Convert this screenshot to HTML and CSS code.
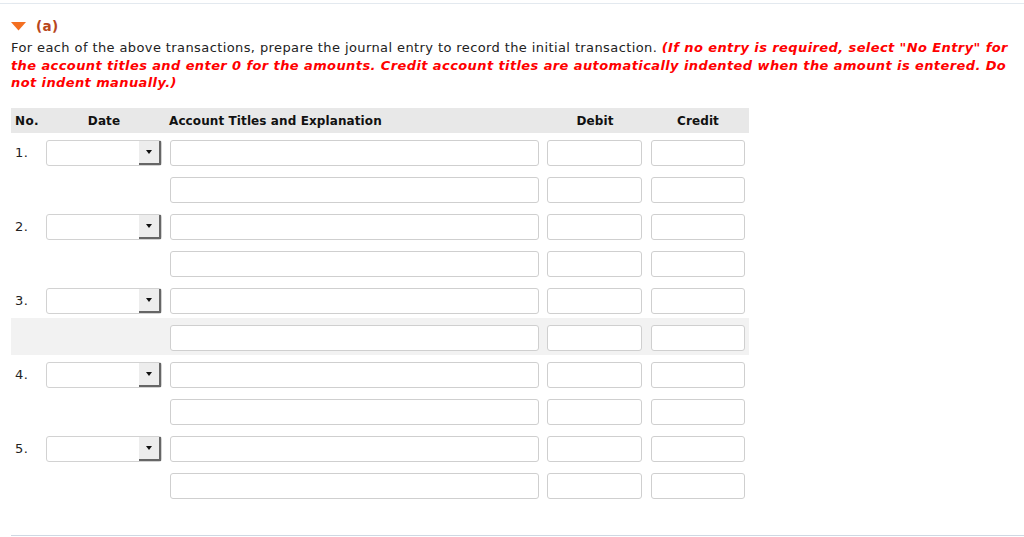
FILE: index.html
```html
<!DOCTYPE html>
<html>
<head>
<meta charset="utf-8">
<link rel="stylesheet" href="styles.css">
</head>
<body>
<div class="topline"></div>
<div class="content">
  <div class="part">
    <svg class="tri" width="15" height="9" viewBox="0 0 15 9"><polygon points="0,0 15,0 7.5,8.5" fill="#f36f21"/></svg>
    <span class="part-label">(a)</span>
  </div>
  <p class="instr">For each of the above transactions, prepare the journal entry to record the initial transaction. <em>(If no entry is required, select "No Entry" for the account titles and enter 0 for the amounts. Credit account titles are automatically indented when the amount is entered. Do not indent manually.)</em></p>

  <div class="journal">
    <div class="row head">
      <div class="c-no">No.</div>
      <div class="c-date">Date</div>
      <div class="c-acct">Account Titles and Explanation</div>
      <div class="c-debit">Debit</div>
      <div class="c-credit">Credit</div>
    </div>

    <div class="row"><div class="c-no">1.</div><div class="c-date"><div class="sel"><span class="btn"><i></i></span></div></div><div class="c-acct"><div class="inp"></div></div><div class="c-debit"><div class="inp"></div></div><div class="c-credit"><div class="inp"></div></div></div>
    <div class="row"><div class="c-no"></div><div class="c-date"></div><div class="c-acct"><div class="inp"></div></div><div class="c-debit"><div class="inp"></div></div><div class="c-credit"><div class="inp"></div></div></div>

    <div class="row"><div class="c-no">2.</div><div class="c-date"><div class="sel"><span class="btn"><i></i></span></div></div><div class="c-acct"><div class="inp"></div></div><div class="c-debit"><div class="inp"></div></div><div class="c-credit"><div class="inp"></div></div></div>
    <div class="row"><div class="c-no"></div><div class="c-date"></div><div class="c-acct"><div class="inp"></div></div><div class="c-debit"><div class="inp"></div></div><div class="c-credit"><div class="inp"></div></div></div>

    <div class="row"><div class="c-no">3.</div><div class="c-date"><div class="sel"><span class="btn"><i></i></span></div></div><div class="c-acct"><div class="inp"></div></div><div class="c-debit"><div class="inp"></div></div><div class="c-credit"><div class="inp"></div></div></div>
    <div class="row hl"><div class="c-no"></div><div class="c-date"></div><div class="c-acct"><div class="inp"></div></div><div class="c-debit"><div class="inp"></div></div><div class="c-credit"><div class="inp"></div></div></div>

    <div class="row"><div class="c-no">4.</div><div class="c-date"><div class="sel"><span class="btn"><i></i></span></div></div><div class="c-acct"><div class="inp"></div></div><div class="c-debit"><div class="inp"></div></div><div class="c-credit"><div class="inp"></div></div></div>
    <div class="row"><div class="c-no"></div><div class="c-date"></div><div class="c-acct"><div class="inp"></div></div><div class="c-debit"><div class="inp"></div></div><div class="c-credit"><div class="inp"></div></div></div>

    <div class="row"><div class="c-no">5.</div><div class="c-date"><div class="sel"><span class="btn"><i></i></span></div></div><div class="c-acct"><div class="inp"></div></div><div class="c-debit"><div class="inp"></div></div><div class="c-credit"><div class="inp"></div></div></div>
    <div class="row"><div class="c-no"></div><div class="c-date"></div><div class="c-acct"><div class="inp"></div></div><div class="c-debit"><div class="inp"></div></div><div class="c-credit"><div class="inp"></div></div></div>
  </div>
  <div class="bottomline"></div>
</div>
</body>
</html>
```

FILE: styles.css
```css
html, body {
  margin: 0;
  padding: 0;
  background: #fff;
}
body {
  font-family: "DejaVu Sans", Verdana, sans-serif;
  font-size: 13px;
  color: #222;
}
.topline {
  margin-top: 3px;
  height: 1px;
  background: #e3e9ef;
}
.content {
  padding-left: 11px;
}
.part {
  display: flex;
  align-items: center;
  gap: 10px;
  margin-top: 14px;
  height: 16px;
}
.tri {
  display: block;
  margin-top: 1px;
}
.part-label {
  font-weight: bold;
  color: #b8471c;
  font-size: 13.5px;
  letter-spacing: 0.4px;
}
.instr {
  margin: 5px 0 0 0;
  line-height: 17.5px;
  width: 1005px;
  letter-spacing: 0.4px;
}
.instr em {
  color: #ff0000;
  font-weight: bold;
  font-style: italic;
}
.journal {
  margin-top: 16px;
  width: 738px;
}
.row {
  display: grid;
  grid-template-columns: 31px 124px 377px 104px 102px;
  height: 37px;
  align-items: start;
}
.row.head {
  height: 25px;
  background: #e8e8e8;
  font-weight: bold;
  font-size: 12px;
  letter-spacing: 0.1px;
  align-items: center;
  color: #111;
}
.row.head .c-no { padding-left: 4px; }
.row.head .c-date { text-align: center; padding-left: 0; padding-right: 0; }
.row.head .c-acct { padding-left: 3px; }
.row.head .c-debit, .row.head .c-credit { text-align: center; }
.row.hl {
  background: #f2f2f2;
}
.row > div {
  padding-top: 7px;
}
.row.head > div {
  padding-top: 0;
}
.c-no {
  padding-left: 4px;
  line-height: 26px;
  letter-spacing: 0.4px;
}
.c-date, .c-acct, .c-debit, .c-credit {
  padding-left: 4px;
  padding-right: 4px;
}
.inp {
  height: 26px;
  box-sizing: border-box;
  border: 1px solid #cfcfcf;
  border-radius: 3px;
  background: #fff;
}
.c-debit .inp { width: 95px; }
.c-credit .inp { width: 94px; }
.sel {
  width: 116px;
  height: 26px;
  box-sizing: border-box;
  border: 1px solid #d2d2d2;
  border-radius: 3px;
  background: #fff;
  display: flex;
  justify-content: flex-end;
}
.btn {
  width: 22px;
  height: 24px;
  box-sizing: border-box;
  background: #ededed;
  border-right: 2px solid #666;
  border-bottom: 2px solid #666;
  display: flex;
  align-items: center;
  justify-content: center;
}
.btn i {
  display: block;
  width: 0;
  height: 0;
  border-left: 3px solid transparent;
  border-right: 3px solid transparent;
  border-top: 4px solid #111;
}
.bottomline {
  margin-top: 32px;
  height: 1px;
  background: #cfd8e3;
}
```
